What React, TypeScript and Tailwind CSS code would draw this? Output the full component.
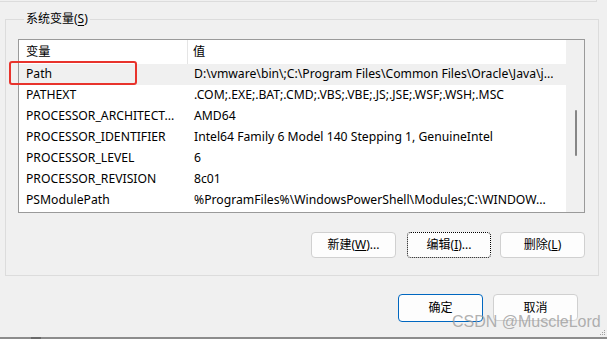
import React from "react";

const rows: [string, string][] = [
  ["Path", "D:\\vmware\\bin\\;C:\\Program Files\\Common Files\\Oracle\\Java\\j..."],
  ["PATHEXT", ".COM;.EXE;.BAT;.CMD;.VBS;.VBE;.JS;.JSE;.WSF;.WSH;.MSC"],
  ["PROCESSOR_ARCHITECT...", "AMD64"],
  ["PROCESSOR_IDENTIFIER", "Intel64 Family 6 Model 140 Stepping 1, GenuineIntel"],
  ["PROCESSOR_LEVEL", "6"],
  ["PROCESSOR_REVISION", "8c01"],
  ["PSModulePath", "%ProgramFiles%\\WindowsPowerShell\\Modules;C:\\WINDOW..."],
];

const font = { fontFamily: '"Noto Sans", "Noto Sans CJK SC", sans-serif' };

function Btn({ children, className = "" }: { children: React.ReactNode; className?: string }) {
  return (
    <div
      className={`flex items-center justify-center bg-[#fdfdfd] text-[12px] text-black rounded-[4px] border ${className}`}
    >
      {children}
    </div>
  );
}

export default function App() {
  return (
    <div
      className="relative w-[607px] h-[339px] bg-[#f0f0f0] overflow-hidden text-black"
      style={font}
    >
      {/* previous group box bottom edge */}
      <div className="w-[597px] h-[2px] border-b border-r border-[#dcdcdc]" />

      <fieldset className="ml-[5px] mt-[8px] w-[592px] h-[266px] border border-[#dcdcdc] pl-[12px] pr-[13px] pt-[0px] flex flex-col">
        <legend className="ml-[6px] px-[2px] text-[12px] leading-[18px]">
          系统变量(<span className="underline underline-offset-2">S</span>)
        </legend>

        {/* list box */}
        <div className="mt-[11px] w-[567px] h-[174px] border border-[#9a9a9a] bg-white flex overflow-hidden">
          <div className="w-[547px] flex flex-col overflow-hidden text-[12.2px]">
            <div className="h-[24px] shrink-0 flex">
              <div className="w-[169px] pl-[7px] pt-[1px] flex items-center border-r border-[#e5e5e5]">变量</div>
              <div className="pl-[5px] pt-[1px] flex items-center">值</div>
            </div>
            {rows.map(([n, v], i) => (
              <div
                key={n}
                className={`h-[21px] shrink-0 flex whitespace-nowrap ${i === 0 ? "bg-[#f0f0f0]" : ""}`}
              >
                <div className="w-[169px] pl-[7px] flex items-center overflow-hidden">{n}</div>
                <div className="pl-[6px] flex items-center overflow-hidden">{v}</div>
              </div>
            ))}
          </div>
          {/* scrollbar */}
          <div className="w-[18px] bg-[#f0f0f0] flex justify-center pt-[70px] pl-[1px]">
            <div className="w-[2px] h-[46px] bg-[#868686] rounded-full" />
          </div>
        </div>

        <div className="mt-[19px] flex justify-end">
          <Btn className="w-[85px] h-[26px] border-[#d0d0d0]">
            新建(<span className="underline">W</span>)...
          </Btn>
          <Btn className="ml-[11px] w-[84px] h-[26px] border-dotted border-black rounded-[2px]">
            编辑(<span className="underline">I</span>)...
          </Btn>
          <Btn className="ml-[9px] w-[85px] h-[26px] border-[#d0d0d0]">
            删除(<span className="underline">L</span>)
          </Btn>
        </div>
      </fieldset>

      <div className="mt-[18px] flex pl-[398px]">
        <Btn className="w-[85px] h-[28px] border-[#0067c0]">确定</Btn>
        <Btn className="ml-[10px] w-[85px] h-[27px] border-[#d0d0d0]">取消</Btn>
      </div>

      {/* bottom edge */}
      <div className="absolute left-0 right-0 bottom-0 h-[2px] bg-[#8c8c8c]">
        <div className="ml-[31px] w-[10px] h-[2px] bg-[#6a6a6a]" />
      </div>

      {/* red annotation */}
      <div className="absolute left-[9px] top-[61px] w-[128px] h-[24px] border-2 border-[#e8332c] rounded-[3px]" />

      {/* watermark */}
      <div
        className="absolute left-[452px] top-[312px] text-[16px] leading-[20px] text-[#9c9c9c]/80 whitespace-nowrap"
        style={{ fontFamily: '"Liberation Sans", Arial, sans-serif' }}
      >
        CSDN @MuscleLord
      </div>

      {/* resize grip */}
      <svg className="absolute right-[1px] bottom-[2px]" width="7" height="7" viewBox="0 0 7 7">
        <rect x="5" y="0" width="1" height="1" fill="#a0a0a0" />
        <rect x="3" y="2" width="1" height="1" fill="#a0a0a0" />
        <rect x="5" y="2" width="1" height="1" fill="#a0a0a0" />
        <rect x="1" y="4" width="1" height="1" fill="#a0a0a0" />
        <rect x="3" y="4" width="1" height="1" fill="#a0a0a0" />
        <rect x="5" y="4" width="1" height="1" fill="#a0a0a0" />
      </svg>
    </div>
  );
}
